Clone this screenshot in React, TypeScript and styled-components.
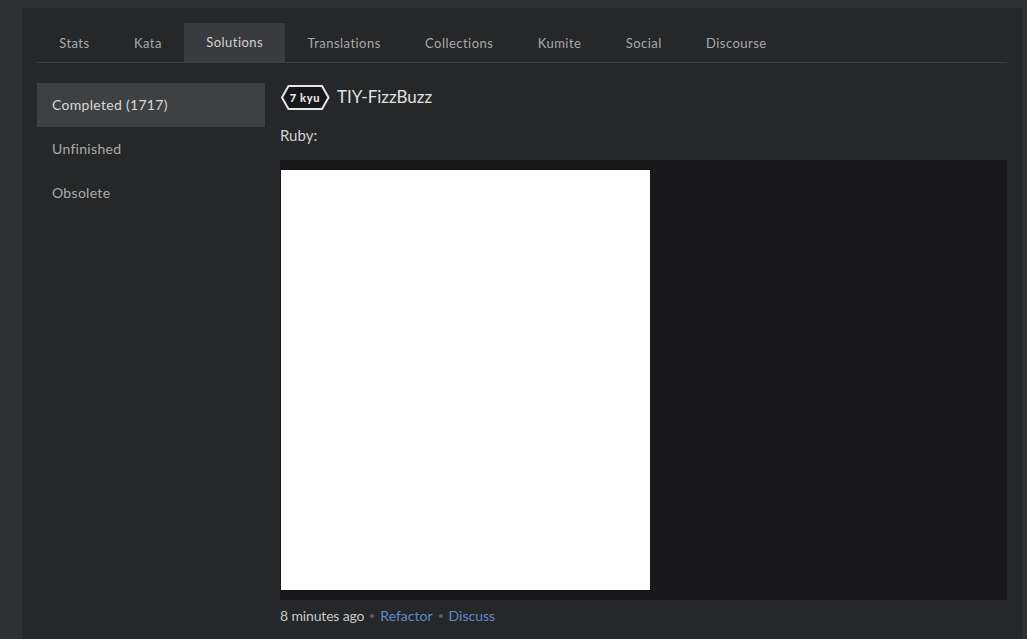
import React from "react";
import styled, { createGlobalStyle } from "styled-components";

const Global = createGlobalStyle`
  html, body { margin: 0; padding: 0; height: 100%; overflow: hidden; background: #303133; }
  body { font-family: Lato, "Liberation Sans", sans-serif; }
  #root { height: 100%; }
`;

const Page = styled.div`
  height: 639px;
  padding: 8px 5px 0 22px;
  box-sizing: border-box;
  overflow: hidden;
`;

const Panel = styled.main`
  height: 631px;
  background: #262729;
  padding: 15px 15px 0;
  box-sizing: border-box;
`;

const Tabs = styled.nav`
  display: flex;
  height: 40px;
  border-bottom: 1px solid #3c3d40;
  box-sizing: border-box;
  margin-bottom: 20px;
`;

const Tab = styled.a<{ $active?: boolean }>`
  display: block;
  height: 39px;
  padding: 0 22.2px;
  font-size: 13px;
  letter-spacing: 0.46px;
  line-height: ${(p) => (p.$active ? "38px" : "40px")};
  color: ${(p) => (p.$active ? "#d2d2d2" : "#a9a9a9")};
  background: ${(p) => (p.$active ? "#3a3b3e" : "transparent")};
`;

const Columns = styled.div`
  display: flex;
  gap: 15px;
`;

const Side = styled.aside`
  width: 228px;
  flex: none;
`;

const SideItem = styled.a<{ $active?: boolean }>`
  display: block;
  height: 44px;
  line-height: 44px;
  padding: 0 15px;
  font-size: 14px;
  letter-spacing: 0.3px;
  color: ${(p) => (p.$active ? "#d8d8d8" : "#ababab")};
  background: ${(p) => (p.$active ? "#3f4042" : "transparent")};
`;

const Content = styled.section`
  flex: 1;
  min-width: 0;
`;

const Title = styled.div`
  display: flex;
  align-items: center;
  gap: 6px;
  height: 28px;
  font-size: 17px;
  color: #e0e0e0;
`;

const TitleText = styled.span`
  margin-bottom: 2px;
`;

const Badge = styled.span`
  position: relative;
  display: block;
  width: 51px;
  height: 28px;
  flex: none;
  svg { display: block; }
`;

const BadgeText = styled.span`
  position: absolute;
  inset: 0;
  padding-right: 1px;
  text-align: center;
  line-height: 29px;
  font-size: 11px;
  font-weight: 900;
  letter-spacing: 0.7px;
  color: #e6e6e6;
`;

const Language = styled.p`
  margin: 0 0 11px;
  padding-top: 16px;
  height: 38px;
  box-sizing: border-box;
  line-height: 17px;
  font-size: 15px;
  color: #d2d2d2;
`;

const CodeBlock = styled.div`
  height: 440px;
  background: #18181a;
  padding: 10px 0 10px 1px;
  box-sizing: border-box;
`;

const CodeImage = styled.div`
  width: 369px;
  height: 420px;
  background: #fff;
`;

const Meta = styled.div`
  display: flex;
  align-items: center;
  height: 30px;
  font-size: 14px;
  color: #c8c8c8;
`;

const Age = styled.span`
  letter-spacing: -0.15px;
`;

const Dot = styled.span`
  width: 4px;
  height: 4px;
  border-radius: 50%;
  background: #5c5d60;
  margin: 2px 6px 0;
`;

const MetaLink = styled.a`
  color: #5e8bcb;
`;

export default function App() {
  const tabs = ["Stats", "Kata", "Solutions", "Translations", "Collections", "Kumite", "Social", "Discourse"];
  return (
    <>
      <Global />
      <Page>
        <Panel>
          <Tabs>
            {tabs.map((t) => (
              <Tab key={t} $active={t === "Solutions"}>{t}</Tab>
            ))}
          </Tabs>
          <Columns>
            <Side>
              <SideItem $active>Completed (1717)</SideItem>
              <SideItem>Unfinished</SideItem>
              <SideItem>Obsolete</SideItem>
            </Side>
            <Content>
              <Title>
                <Badge>
                  <svg width="51" height="28" viewBox="0 0 51 28">
                    <path d="M8.5 3H42L48.5 14.5L42 26H8.5L2 14.5Z" fill="#18181a" stroke="#e6e6e6" strokeWidth="2" />
                  </svg>
                  <BadgeText>7 kyu</BadgeText>
                </Badge>
                <TitleText>TIY-FizzBuzz</TitleText>
              </Title>
              <Language>Ruby:</Language>
              <CodeBlock>
                <CodeImage />
              </CodeBlock>
              <Meta>
                <Age>8 minutes ago</Age>
                <Dot />
                <MetaLink>Refactor</MetaLink>
                <Dot />
                <MetaLink>Discuss</MetaLink>
              </Meta>
            </Content>
          </Columns>
        </Panel>
      </Page>
    </>
  );
}
